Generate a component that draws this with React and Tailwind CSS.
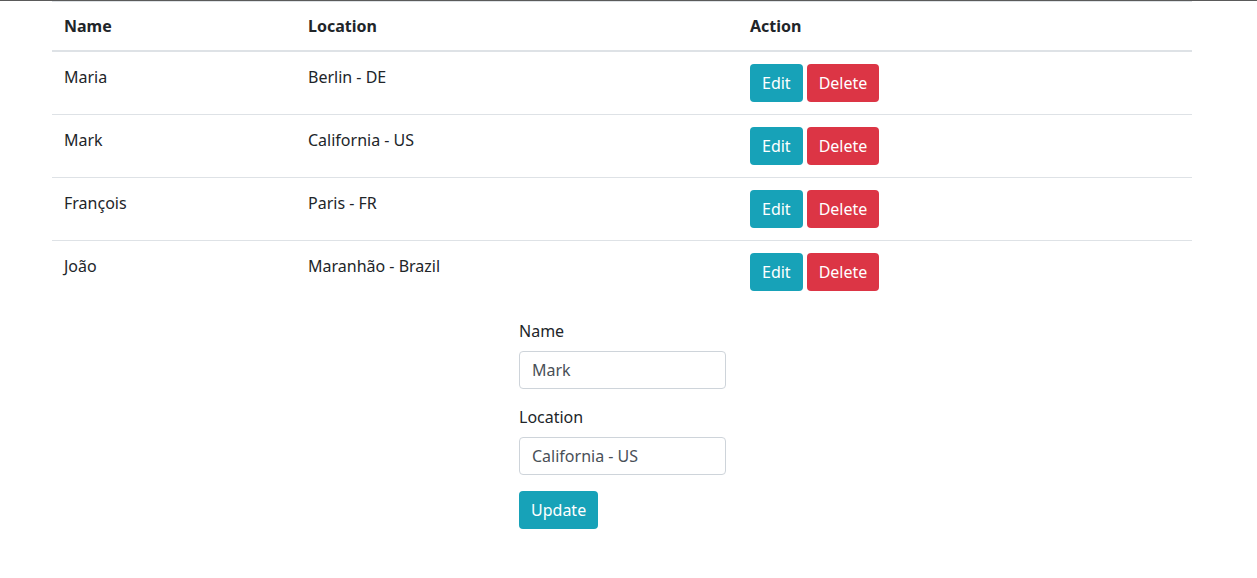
const people = [
  { id: 1, name: 'Maria', location: 'Berlin - DE' },
  { id: 2, name: 'Mark', location: 'California - US' },
  { id: 3, name: 'François', location: 'Paris - FR' },
  { id: 4, name: 'João', location: 'Maranhão - Brazil' },
];

const font = { fontFamily: '"Segoe UI", "Noto Sans", "Open Sans", sans-serif' };

export default function App() {
  return (
    <div className="min-h-[578px] bg-white text-[#212529] text-base leading-6 border-t border-[#5a5a5a]" style={font}>
      <div className="ml-[52px] w-[1140px]">
        <table className="w-full border-collapse mb-4">
          <thead>
            <tr>
              <th className="w-[244px] text-left font-bold p-3 border-t border-[#dee2e6] border-b-2">Name</th>
              <th className="w-[442px] text-left font-bold p-3 border-t border-[#dee2e6] border-b-2">Location</th>
              <th className="text-left font-bold p-3 border-t border-[#dee2e6] border-b-2">Action</th>
            </tr>
          </thead>
          <tbody>
            {people.map((p, i) => (
              <tr key={p.id}>
                <td className={`p-3 pt-[13px] align-top ${i > 0 ? 'border-t border-[#dee2e6]' : ''}`}>{p.name}</td>
                <td className={`p-3 pt-[13px] align-top ${i > 0 ? 'border-t border-[#dee2e6]' : ''}`}>{p.location}</td>
                <td className={`p-3 align-top ${i > 0 ? 'border-t border-[#dee2e6]' : ''}`}>
                  <div className="flex gap-1">
                    <button className="h-[38px] px-3 rounded bg-[#17a2b8] text-white">Edit</button>
                    <button className="h-[38px] px-3 rounded bg-[#dc3545] text-white">Delete</button>
                  </div>
                </td>
              </tr>
            ))}
          </tbody>
        </table>
      </div>

      <form className="ml-[519px] w-[207px]">
        <div className="mb-4">
          <label className="block mb-2">Name</label>
          <input
            defaultValue="Mark"
            className="block w-full h-[38px] px-3 rounded border border-[#ced4da] text-[#495057] outline-none"
            style={font}
          />
        </div>
        <div className="mb-4">
          <label className="block mb-2">Location</label>
          <input
            defaultValue="California - US"
            className="block w-full h-[38px] px-3 rounded border border-[#ced4da] text-[#495057] outline-none"
            style={font}
          />
        </div>
        <button type="button" className="h-[38px] px-3 rounded bg-[#17a2b8] text-white">Update</button>
      </form>
    </div>
  );
}
